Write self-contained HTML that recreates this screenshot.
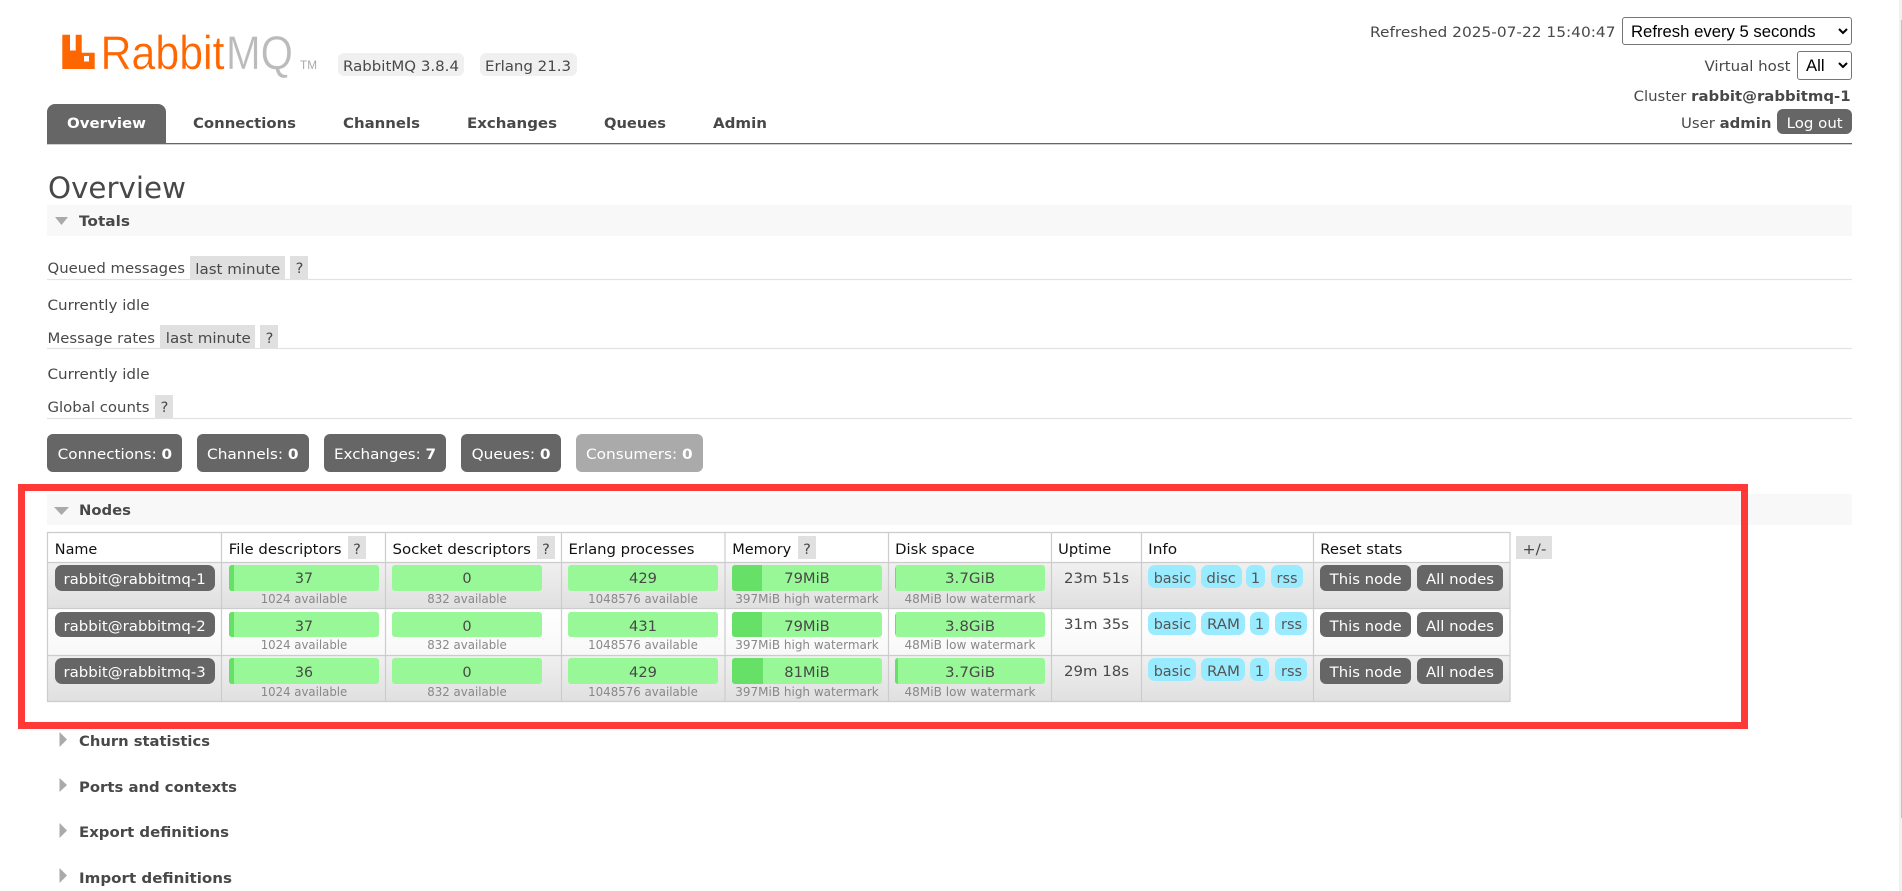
<!DOCTYPE html>
<html lang="en">
<head>
<meta charset="utf-8">
<title>RabbitMQ Management</title>
<style>
html,body{margin:0;padding:0;background:#fff;width:1902px;height:891px;overflow:hidden}
#p{position:absolute;left:0;top:0;display:block}
text{font-family:"DejaVu Sans",sans-serif;font-size:14.5px;fill:#484848}
.b{font-weight:bold}
.w{fill:#fff}
.k{fill:#111}
.s{font-size:12px;fill:#888}
.c{text-anchor:middle}
.i{fill:#555}
.h{fill:#e0e0e0}
.n{fill:#666}
.g{fill:#98f898}
.d{fill:#66e066}
.f{fill:#99ebff}
.l{stroke:#ccc;stroke-width:1.2}
.u{stroke:#e2e2e2;stroke-width:1.3}
select{position:absolute;font-family:"Liberation Sans",Arial,sans-serif;font-size:16.7px;color:#000;background:#fff;border:1px solid #767676;border-radius:3px;box-sizing:border-box;padding:0 0 0 4px;margin:0}
</style>
</head>
<body>
<svg id="p" width="1902" height="891" viewBox="0 0 1902 891" xmlns="http://www.w3.org/2000/svg">
<defs>
<linearGradient id="a1" x1="0" y1="0" x2="0" y2="1"><stop offset="0" stop-color="#f0f0f0"/><stop offset="1" stop-color="#e0e0e0"/></linearGradient>
<linearGradient id="a2" x1="0" y1="0" x2="0" y2="1"><stop offset="0" stop-color="#fff"/><stop offset="1" stop-color="#f8f8f8"/></linearGradient>
</defs>

<!-- scrollbar -->
<rect x="1899" y="0" width="3" height="891" fill="#f1f1f1"/>
<rect x="1901" y="20" width="1" height="798" fill="#c1c1c1"/>

<!-- logo -->
<path fill="#f60" fill-rule="evenodd" d="M62.3 34.7H70V50.5H75.7V34.7H81.7V52.7H94.7V69H62.3ZM84 56V61.5H89V56Z"/>
<text x="100.500" y="69" textLength="124" lengthAdjust="spacingAndGlyphs" style="font-family:'Liberation Sans',sans-serif;font-size:47px;fill:#f60;stroke:#fff;stroke-width:.35px">Rabbit</text>
<text x="226" y="69" textLength="67" lengthAdjust="spacingAndGlyphs" style="font-family:'Liberation Sans',sans-serif;font-size:47px;fill:#bbb;stroke:#fff;stroke-width:.35px">MQ</text>
<text x="300" y="69" textLength="17" lengthAdjust="spacingAndGlyphs" style="font-family:'Liberation Sans',sans-serif;font-size:11.6px;fill:#aaa">TM</text>

<!-- version badges -->
<rect x="338" y="53" width="126" height="23" rx="6" fill="#f0f0f0"/>
<rect x="480" y="53" width="97" height="23" rx="6" fill="#f0f0f0"/>
<text x="343" y="71" textLength="116" lengthAdjust="spacingAndGlyphs">RabbitMQ 3.8.4</text>
<text x="485" y="71" textLength="86" lengthAdjust="spacingAndGlyphs">Erlang 21.3</text>

<!-- top right -->
<text x="1370" y="37" textLength="245.500" lengthAdjust="spacingAndGlyphs">Refreshed 2025-07-22 15:40:47</text>
<text x="1704.500" y="71" textLength="86" lengthAdjust="spacingAndGlyphs">Virtual host</text>
<text x="1633.600" y="101" textLength="217" lengthAdjust="spacingAndGlyphs">Cluster <tspan class="b">rabbit@rabbitmq-1</tspan></text>
<text x="1681" y="128" textLength="90.500" lengthAdjust="spacingAndGlyphs">User <tspan class="b">admin</tspan></text>
<rect x="1777" y="109" width="75" height="25" rx="6" class="n"/>
<text class="w" x="1786.700" y="128" textLength="56" lengthAdjust="spacingAndGlyphs">Log out</text>

<!-- nav -->
<path class="n" d="M47 143V112a8 8 0 0 1 8-8H158a8 8 0 0 1 8 8V143Z"/>
<rect x="47" y="143" width="1805" height="1.3" fill="#666"/>
<text class="b w" x="67" y="128" textLength="79" lengthAdjust="spacingAndGlyphs">Overview</text>
<text class="b" x="193" y="128" textLength="103" lengthAdjust="spacingAndGlyphs">Connections</text>
<text class="b" x="343" y="128" textLength="77" lengthAdjust="spacingAndGlyphs">Channels</text>
<text class="b" x="467" y="128" textLength="90" lengthAdjust="spacingAndGlyphs">Exchanges</text>
<text class="b" x="604" y="128" textLength="62" lengthAdjust="spacingAndGlyphs">Queues</text>
<text class="b" x="713" y="128" textLength="54" lengthAdjust="spacingAndGlyphs">Admin</text>

<!-- heading -->
<text x="48" y="198" textLength="138" lengthAdjust="spacingAndGlyphs" style="font-size:29px">Overview</text>

<!-- totals -->
<rect x="47" y="205" width="1805" height="31" fill="#f8f8f8"/>
<path d="M55 217H68L61.500 225Z" fill="#aaa"/>
<text class="b" x="79" y="226" textLength="51" lengthAdjust="spacingAndGlyphs">Totals</text>

<line class="u" x1="47" y1="279.500" x2="1852" y2="279.500"/>
<text x="47.500" y="273" textLength="137.500" lengthAdjust="spacingAndGlyphs">Queued messages</text>
<rect class="h" x="190" y="256" width="95" height="23"/>
<text x="195.300" y="274" textLength="85" lengthAdjust="spacingAndGlyphs">last minute</text>
<rect class="h" x="290" y="256" width="18" height="23"/>
<text class="c" x="299.500" y="273">?</text>

<text x="47.500" y="310" textLength="102" lengthAdjust="spacingAndGlyphs">Currently idle</text>

<line class="u" x1="47" y1="348.500" x2="1852" y2="348.500"/>
<text x="47.500" y="343" textLength="107.500" lengthAdjust="spacingAndGlyphs">Message rates</text>
<rect class="h" x="160" y="325" width="95" height="23"/>
<text x="165.800" y="343" textLength="85" lengthAdjust="spacingAndGlyphs">last minute</text>
<rect class="h" x="260" y="325" width="18" height="23"/>
<text class="c" x="269.500" y="343">?</text>

<text x="47.500" y="379" textLength="102" lengthAdjust="spacingAndGlyphs">Currently idle</text>

<line class="u" x1="47" y1="418.500" x2="1852" y2="418.500"/>
<text x="47.500" y="412" textLength="102" lengthAdjust="spacingAndGlyphs">Global counts</text>
<rect class="h" x="155" y="395" width="18" height="23"/>
<text class="c" x="164.500" y="412">?</text>

<!-- stat buttons -->
<rect class="n" x="47" y="434" width="135" height="38" rx="6"/>
<rect class="n" x="197" y="434" width="112" height="38" rx="6"/>
<rect class="n" x="324" y="434" width="122" height="38" rx="6"/>
<rect class="n" x="461" y="434" width="100" height="38" rx="6"/>
<rect x="576" y="434" width="127" height="38" rx="6" fill="#aaa"/>
<text class="w" x="57.700" y="459" textLength="114.400" lengthAdjust="spacingAndGlyphs">Connections: <tspan class="b w">0</tspan></text>
<text class="w" x="207" y="459" textLength="91.600" lengthAdjust="spacingAndGlyphs">Channels: <tspan class="b w">0</tspan></text>
<text class="w" x="334" y="459" textLength="102" lengthAdjust="spacingAndGlyphs">Exchanges: <tspan class="b w">7</tspan></text>
<text class="w" x="471.600" y="459" textLength="79" lengthAdjust="spacingAndGlyphs">Queues: <tspan class="b w">0</tspan></text>
<text class="w" x="586" y="459" textLength="106.700" lengthAdjust="spacingAndGlyphs">Consumers: <tspan class="b w">0</tspan></text>

<!-- nodes section -->
<rect x="47" y="494" width="1805" height="31" fill="#f8f8f8"/>
<path d="M54 507H69L61.500 515Z" fill="#aaa"/>
<text class="b" x="79" y="515" textLength="52" lengthAdjust="spacingAndGlyphs">Nodes</text>

<!-- table -->
<rect x="47" y="532" width="1463" height="30" fill="#fff"/>
<rect x="47" y="562" width="1463" height="46" fill="url(#a1)"/>
<rect x="47" y="608" width="1463" height="47" fill="url(#a2)"/>
<rect x="47" y="655" width="1463" height="46" fill="url(#a1)"/>
<g class="l">
<line x1="47" y1="532.500" x2="1510" y2="532.500"/>
<line x1="47" y1="562.500" x2="1510" y2="562.500"/>
<line x1="47" y1="608.500" x2="1510" y2="608.500"/>
<line x1="47" y1="655.500" x2="1510" y2="655.500"/>
<line x1="47" y1="701.500" x2="1510" y2="701.500"/>
<line x1="47.500" y1="532" x2="47.500" y2="702"/>
<line x1="221.500" y1="532" x2="221.500" y2="702"/>
<line x1="385.500" y1="532" x2="385.500" y2="702"/>
<line x1="561.500" y1="532" x2="561.500" y2="702"/>
<line x1="725" y1="532" x2="725" y2="702"/>
<line x1="888.500" y1="532" x2="888.500" y2="702"/>
<line x1="1051.500" y1="532" x2="1051.500" y2="702"/>
<line x1="1141.500" y1="532" x2="1141.500" y2="702"/>
<line x1="1313.500" y1="532" x2="1313.500" y2="702"/>
<line x1="1510" y1="532" x2="1510" y2="702"/>
</g>

<!-- header -->
<text class="k" x="54.800" y="554" textLength="42.500" lengthAdjust="spacingAndGlyphs">Name</text>
<text class="k" x="228.800" y="554" textLength="112.700" lengthAdjust="spacingAndGlyphs">File descriptors</text>
<rect class="h" x="348" y="536" width="18" height="23"/>
<text class="c" x="357" y="554">?</text>
<text class="k" x="392.500" y="554" textLength="138.400" lengthAdjust="spacingAndGlyphs">Socket descriptors</text>
<rect class="h" x="537" y="536" width="18" height="23"/>
<text class="c" x="546" y="554">?</text>
<text class="k" x="568.500" y="554" textLength="126" lengthAdjust="spacingAndGlyphs">Erlang processes</text>
<text class="k" x="732.200" y="554" textLength="59" lengthAdjust="spacingAndGlyphs">Memory</text>
<rect class="h" x="798" y="536" width="18" height="23"/>
<text class="c" x="807" y="554">?</text>
<text class="k" x="895.200" y="554" textLength="79.500" lengthAdjust="spacingAndGlyphs">Disk space</text>
<text class="k" x="1058.200" y="554" textLength="53" lengthAdjust="spacingAndGlyphs">Uptime</text>
<text class="k" x="1148.200" y="554" textLength="29" lengthAdjust="spacingAndGlyphs">Info</text>
<text class="k" x="1320.300" y="554" textLength="82" lengthAdjust="spacingAndGlyphs">Reset stats</text>
<rect class="h" x="1516" y="536" width="36" height="23"/>
<text x="1522.500" y="554" textLength="24" lengthAdjust="spacingAndGlyphs">+/-</text>

<!-- row 1 -->
<rect class="n" x="55" y="565" width="160" height="26" rx="7"/>
<text class="w" x="63.500" y="584" textLength="142.300" lengthAdjust="spacingAndGlyphs">rabbit@rabbitmq-1</text>
<rect class="g" x="229" y="565" width="150" height="26" rx="3"/>
<path class="d" d="M232 565H234V591H232a3 3 0 0 1-3-3V568a3 3 0 0 1 3-3Z"/>
<text class="c" x="304" y="583" textLength="18" lengthAdjust="spacingAndGlyphs">37</text>
<text class="s c" x="304" y="603" textLength="86.600" lengthAdjust="spacingAndGlyphs">1024 available</text>
<rect class="g" x="392" y="565" width="150" height="26" rx="3"/>
<text class="c" x="467" y="583">0</text>
<text class="s c" x="467" y="603" textLength="79.500" lengthAdjust="spacingAndGlyphs">832 available</text>
<rect class="g" x="568" y="565" width="150" height="26" rx="3"/>
<text class="c" x="643" y="583" textLength="28" lengthAdjust="spacingAndGlyphs">429</text>
<text class="s c" x="643" y="603" textLength="109.700" lengthAdjust="spacingAndGlyphs">1048576 available</text>
<rect class="g" x="732" y="565" width="150" height="26" rx="3"/>
<path class="d" d="M735 565H762V591H735a3 3 0 0 1-3-3V568a3 3 0 0 1 3-3Z"/>
<text class="c" x="807" y="583" textLength="45.500" lengthAdjust="spacingAndGlyphs">79MiB</text>
<text class="s c" x="807" y="603" textLength="143.500" lengthAdjust="spacingAndGlyphs">397MiB high watermark</text>
<rect class="g" x="895" y="565" width="150" height="26" rx="3"/>
<rect class="d" x="895" y="568" width="1" height="20"/>
<text class="c" x="970" y="583" textLength="50" lengthAdjust="spacingAndGlyphs">3.7GiB</text>
<text class="s c" x="970" y="603" textLength="131" lengthAdjust="spacingAndGlyphs">48MiB low watermark</text>
<text x="1064" y="583" textLength="65" lengthAdjust="spacingAndGlyphs">23m 51s</text>
<rect class="f" x="1148" y="565" width="48" height="23" rx="7"/>
<text class="i" x="1153.700" y="583" textLength="37.300" lengthAdjust="spacingAndGlyphs">basic</text>
<rect class="f" x="1201" y="565" width="41" height="23" rx="7"/>
<text class="i" x="1206.400" y="583" textLength="29.600" lengthAdjust="spacingAndGlyphs">disc</text>
<rect class="f" x="1246" y="565" width="19" height="23" rx="7"/>
<text class="i c" x="1255.500" y="583">1</text>
<rect class="f" x="1271" y="565" width="32" height="23" rx="7"/>
<text class="i" x="1276.500" y="583" textLength="21" lengthAdjust="spacingAndGlyphs">rss</text>
<rect class="n" x="1320" y="565" width="91" height="26" rx="6"/>
<text class="w" x="1329.700" y="584" textLength="72" lengthAdjust="spacingAndGlyphs">This node</text>
<rect class="n" x="1417" y="565" width="86" height="26" rx="6"/>
<text class="w" x="1426" y="584" textLength="68" lengthAdjust="spacingAndGlyphs">All nodes</text>

<!-- row 2 -->
<rect class="n" x="55" y="612" width="160" height="25" rx="7"/>
<text class="w" x="63.500" y="631" textLength="142.300" lengthAdjust="spacingAndGlyphs">rabbit@rabbitmq-2</text>
<rect class="g" x="229" y="612" width="150" height="25" rx="3"/>
<path class="d" d="M232 612H234V637H232a3 3 0 0 1-3-3V615a3 3 0 0 1 3-3Z"/>
<text class="c" x="304" y="631" textLength="18" lengthAdjust="spacingAndGlyphs">37</text>
<text class="s c" x="304" y="649" textLength="86.600" lengthAdjust="spacingAndGlyphs">1024 available</text>
<rect class="g" x="392" y="612" width="150" height="25" rx="3"/>
<text class="c" x="467" y="631">0</text>
<text class="s c" x="467" y="649" textLength="79.500" lengthAdjust="spacingAndGlyphs">832 available</text>
<rect class="g" x="568" y="612" width="150" height="25" rx="3"/>
<text class="c" x="643" y="631" textLength="28" lengthAdjust="spacingAndGlyphs">431</text>
<text class="s c" x="643" y="649" textLength="109.700" lengthAdjust="spacingAndGlyphs">1048576 available</text>
<rect class="g" x="732" y="612" width="150" height="25" rx="3"/>
<path class="d" d="M735 612H762V637H735a3 3 0 0 1-3-3V615a3 3 0 0 1 3-3Z"/>
<text class="c" x="807" y="631" textLength="45.500" lengthAdjust="spacingAndGlyphs">79MiB</text>
<text class="s c" x="807" y="649" textLength="143.500" lengthAdjust="spacingAndGlyphs">397MiB high watermark</text>
<rect class="g" x="895" y="612" width="150" height="25" rx="3"/>
<rect class="d" x="895" y="615" width="1" height="19"/>
<text class="c" x="970" y="631" textLength="50" lengthAdjust="spacingAndGlyphs">3.8GiB</text>
<text class="s c" x="970" y="649" textLength="131" lengthAdjust="spacingAndGlyphs">48MiB low watermark</text>
<text x="1064" y="629" textLength="65" lengthAdjust="spacingAndGlyphs">31m 35s</text>
<rect class="f" x="1148" y="612" width="48" height="23" rx="7"/>
<text class="i" x="1153.700" y="629" textLength="37.300" lengthAdjust="spacingAndGlyphs">basic</text>
<rect class="f" x="1201" y="612" width="44" height="23" rx="7"/>
<text class="i" x="1207" y="629" textLength="33" lengthAdjust="spacingAndGlyphs">RAM</text>
<rect class="f" x="1250" y="612" width="19" height="23" rx="7"/>
<text class="i c" x="1259.500" y="629">1</text>
<rect class="f" x="1275" y="612" width="32" height="23" rx="7"/>
<text class="i" x="1281" y="629" textLength="21" lengthAdjust="spacingAndGlyphs">rss</text>
<rect class="n" x="1320" y="612" width="91" height="25" rx="6"/>
<text class="w" x="1329.700" y="631" textLength="72" lengthAdjust="spacingAndGlyphs">This node</text>
<rect class="n" x="1417" y="612" width="86" height="25" rx="6"/>
<text class="w" x="1426" y="631" textLength="68" lengthAdjust="spacingAndGlyphs">All nodes</text>

<!-- row 3 -->
<rect class="n" x="55" y="658" width="160" height="26" rx="7"/>
<text class="w" x="63.500" y="677" textLength="142.300" lengthAdjust="spacingAndGlyphs">rabbit@rabbitmq-3</text>
<rect class="g" x="229" y="658" width="150" height="26" rx="3"/>
<path class="d" d="M232 658H234V684H232a3 3 0 0 1-3-3V661a3 3 0 0 1 3-3Z"/>
<text class="c" x="304" y="677" textLength="18" lengthAdjust="spacingAndGlyphs">36</text>
<text class="s c" x="304" y="696" textLength="86.600" lengthAdjust="spacingAndGlyphs">1024 available</text>
<rect class="g" x="392" y="658" width="150" height="26" rx="3"/>
<text class="c" x="467" y="677">0</text>
<text class="s c" x="467" y="696" textLength="79.500" lengthAdjust="spacingAndGlyphs">832 available</text>
<rect class="g" x="568" y="658" width="150" height="26" rx="3"/>
<text class="c" x="643" y="677" textLength="28" lengthAdjust="spacingAndGlyphs">429</text>
<text class="s c" x="643" y="696" textLength="109.700" lengthAdjust="spacingAndGlyphs">1048576 available</text>
<rect class="g" x="732" y="658" width="150" height="26" rx="3"/>
<path class="d" d="M735 658H763V684H735a3 3 0 0 1-3-3V661a3 3 0 0 1 3-3Z"/>
<text class="c" x="807" y="677" textLength="45.500" lengthAdjust="spacingAndGlyphs">81MiB</text>
<text class="s c" x="807" y="696" textLength="143.500" lengthAdjust="spacingAndGlyphs">397MiB high watermark</text>
<rect class="g" x="895" y="658" width="150" height="26" rx="3"/>
<path class="d" d="M898 658V684a3 3 0 0 1-3-3V661a3 3 0 0 1 3-3Z"/>
<text class="c" x="970" y="677" textLength="50" lengthAdjust="spacingAndGlyphs">3.7GiB</text>
<text class="s c" x="970" y="696" textLength="131" lengthAdjust="spacingAndGlyphs">48MiB low watermark</text>
<text x="1064" y="676" textLength="65" lengthAdjust="spacingAndGlyphs">29m 18s</text>
<rect class="f" x="1148" y="658" width="48" height="23" rx="7"/>
<text class="i" x="1153.700" y="676" textLength="37.300" lengthAdjust="spacingAndGlyphs">basic</text>
<rect class="f" x="1201" y="658" width="44" height="23" rx="7"/>
<text class="i" x="1207" y="676" textLength="33" lengthAdjust="spacingAndGlyphs">RAM</text>
<rect class="f" x="1250" y="658" width="19" height="23" rx="7"/>
<text class="i c" x="1259.500" y="676">1</text>
<rect class="f" x="1275" y="658" width="32" height="23" rx="7"/>
<text class="i" x="1281" y="676" textLength="21" lengthAdjust="spacingAndGlyphs">rss</text>
<rect class="n" x="1320" y="658" width="91" height="26" rx="6"/>
<text class="w" x="1329.700" y="677" textLength="72" lengthAdjust="spacingAndGlyphs">This node</text>
<rect class="n" x="1417" y="658" width="86" height="26" rx="6"/>
<text class="w" x="1426" y="677" textLength="68" lengthAdjust="spacingAndGlyphs">All nodes</text>

<!-- annotation box -->
<rect x="21.500" y="487.500" width="1723" height="238" fill="none" stroke="#ff3838" stroke-width="7"/>

<!-- collapsed sections -->
<path d="M59.500 732L67 739.500L59.500 747Z" fill="#aaa"/>
<text class="b" x="79" y="746" textLength="131" lengthAdjust="spacingAndGlyphs">Churn statistics</text>
<path d="M59.500 778L67 785L59.500 792Z" fill="#aaa"/>
<text class="b" x="79" y="792" textLength="158" lengthAdjust="spacingAndGlyphs">Ports and contexts</text>
<path d="M59.500 823L67 830.500L59.500 838Z" fill="#aaa"/>
<text class="b" x="79" y="837" textLength="150" lengthAdjust="spacingAndGlyphs">Export definitions</text>
<path d="M59.500 868L67 875.500L59.500 883Z" fill="#aaa"/>
<text class="b" x="79" y="883" textLength="153" lengthAdjust="spacingAndGlyphs">Import definitions</text>
</svg>

<select style="left:1622px;top:17px;width:230px;height:28px">
<option>Refresh every 5 seconds</option>
</select>
<select style="left:1797px;top:51px;width:55px;height:29px">
<option>All</option>
</select>
</body>
</html>
